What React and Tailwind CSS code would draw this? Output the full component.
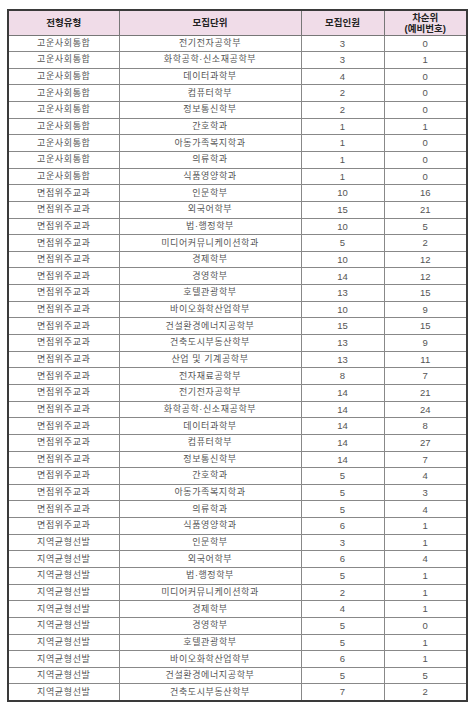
import React from 'react';

const rows = [
  ['고운사회통합', '전기전자공학부', '3', '0'],
  ['고운사회통합', '화학공학·신소재공학부', '3', '1'],
  ['고운사회통합', '데이터과학부', '4', '0'],
  ['고운사회통합', '컴퓨터학부', '2', '0'],
  ['고운사회통합', '정보통신학부', '2', '0'],
  ['고운사회통합', '간호학과', '1', '1'],
  ['고운사회통합', '아동가족복지학과', '1', '0'],
  ['고운사회통합', '의류학과', '1', '0'],
  ['고운사회통합', '식품영양학과', '1', '0'],
  ['면접위주교과', '인문학부', '10', '16'],
  ['면접위주교과', '외국어학부', '15', '21'],
  ['면접위주교과', '법·행정학부', '10', '5'],
  ['면접위주교과', '미디어커뮤니케이션학과', '5', '2'],
  ['면접위주교과', '경제학부', '10', '12'],
  ['면접위주교과', '경영학부', '14', '12'],
  ['면접위주교과', '호텔관광학부', '13', '15'],
  ['면접위주교과', '바이오화학산업학부', '10', '9'],
  ['면접위주교과', '건설환경에너지공학부', '15', '15'],
  ['면접위주교과', '건축도시부동산학부', '13', '9'],
  ['면접위주교과', '산업 및 기계공학부', '13', '11'],
  ['면접위주교과', '전자재료공학부', '8', '7'],
  ['면접위주교과', '전기전자공학부', '14', '21'],
  ['면접위주교과', '화학공학·신소재공학부', '14', '24'],
  ['면접위주교과', '데이터과학부', '14', '8'],
  ['면접위주교과', '컴퓨터학부', '14', '27'],
  ['면접위주교과', '정보통신학부', '14', '7'],
  ['면접위주교과', '간호학과', '5', '4'],
  ['면접위주교과', '아동가족복지학과', '5', '3'],
  ['면접위주교과', '의류학과', '5', '4'],
  ['면접위주교과', '식품영양학과', '6', '1'],
  ['지역균형선발', '인문학부', '3', '1'],
  ['지역균형선발', '외국어학부', '6', '4'],
  ['지역균형선발', '법·행정학부', '5', '1'],
  ['지역균형선발', '미디어커뮤니케이션학과', '2', '1'],
  ['지역균형선발', '경제학부', '4', '1'],
  ['지역균형선발', '경영학부', '5', '0'],
  ['지역균형선발', '호텔관광학부', '5', '1'],
  ['지역균형선발', '바이오화학산업학부', '6', '1'],
  ['지역균형선발', '건설환경에너지공학부', '5', '5'],
  ['지역균형선발', '건축도시부동산학부', '7', '2'],
];

const font = { fontFamily: '"Liberation Sans", "Noto Sans CJK KR", sans-serif' };

const App = () => {
  return (
    <div className="w-[474px] h-[707px] bg-white pt-[9px] pl-[7px]" style={font}>
      <table className="w-[459px] border-collapse border-2 border-[#3a3a3a] table-fixed text-center">
        <colgroup>
          <col className="w-[111px]" />
          <col className="w-[182px]" />
          <col className="w-[83px]" />
          <col className="w-[83px]" />
        </colgroup>
        <thead>
          <tr className="h-[25px] bg-[#f0dce8] text-[9.5px] font-bold text-[#222] leading-[11px]">
            <th className="border border-[#777]">전형유형</th>
            <th className="border border-[#777]">모집단위</th>
            <th className="border border-[#777]">모집인원</th>
            <th className="border border-[#777]">
              차순위
              <br />
              (예비번호)
            </th>
          </tr>
        </thead>
        <tbody>
          {rows.map((r, i) => (
            <tr key={i} className="h-[16.65px] text-[9px] text-[#555] leading-none">
              <td className="border border-[#888] p-0 tracking-[0.6px]">{r[0]}</td>
              <td className="border border-[#888] p-0 tracking-[0.6px]">{r[1]}</td>
              <td className="border border-[#888] p-0 text-[9.5px]">{r[2]}</td>
              <td className="border border-[#888] p-0 text-[9.5px]">{r[3]}</td>
            </tr>
          ))}
        </tbody>
      </table>
    </div>
  );
};

export default App;
